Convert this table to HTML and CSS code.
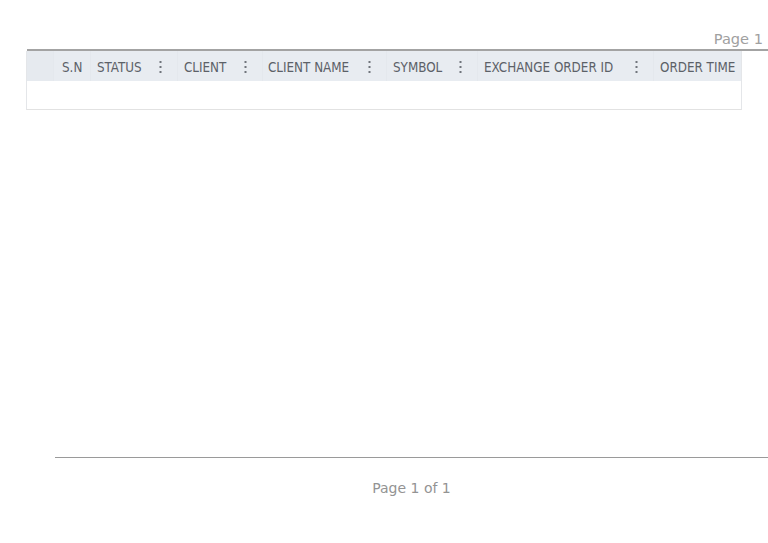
FILE: index.html
```html
<!DOCTYPE html>
<html>
<head>
<meta charset="utf-8">
<link rel="stylesheet" href="styles.css">
</head>
<body>
<div class="page-head"><span class="page-no">Page 1</span></div>
<div class="head-rule"></div>
<div class="grid">
  <div class="row header">
    <div class="cell c0"></div>
    <div class="cell c1"><span>S.N</span></div>
    <div class="cell c2"><span>STATUS</span><svg class="dots" width="3" height="14" viewBox="0 0 3 14"><rect x="0.5" y="1" width="2" height="2"/><rect x="0.5" y="6" width="2" height="2"/><rect x="0.5" y="11" width="2" height="2"/></svg></div>
    <div class="cell c3"><span>CLIENT</span><svg class="dots" width="3" height="14" viewBox="0 0 3 14"><rect x="0.5" y="1" width="2" height="2"/><rect x="0.5" y="6" width="2" height="2"/><rect x="0.5" y="11" width="2" height="2"/></svg></div>
    <div class="cell c4"><span>CLIENT NAME</span><svg class="dots" width="3" height="14" viewBox="0 0 3 14"><rect x="0.5" y="1" width="2" height="2"/><rect x="0.5" y="6" width="2" height="2"/><rect x="0.5" y="11" width="2" height="2"/></svg></div>
    <div class="cell c5"><span>SYMBOL</span><svg class="dots" width="3" height="14" viewBox="0 0 3 14"><rect x="0.5" y="1" width="2" height="2"/><rect x="0.5" y="6" width="2" height="2"/><rect x="0.5" y="11" width="2" height="2"/></svg></div>
    <div class="cell c6"><span>EXCHANGE ORDER ID</span><svg class="dots" width="3" height="14" viewBox="0 0 3 14"><rect x="0.5" y="1" width="2" height="2"/><rect x="0.5" y="6" width="2" height="2"/><rect x="0.5" y="11" width="2" height="2"/></svg></div>
    <div class="cell c7"><span>ORDER TIME</span></div>
  </div>
  <div class="row body-row"></div>
</div>
<div class="foot">
  <div class="foot-rule"></div>
  <div class="foot-text">Page 1 of 1</div>
</div>
</body>
</html>
```
FILE: styles.css
```css
html, body {
  margin: 0;
  padding: 0;
  background: #ffffff;
  overflow: hidden;
}
body {
  width: 768px;
  height: 543px;
  font-family: "DejaVu Sans", sans-serif;
}
.page-head {
  height: 49px;
  display: flex;
  justify-content: flex-end;
  align-items: flex-end;
  padding-right: 5px;
}
.page-no {
  font-size: 14.6px;
  line-height: 18px;
  color: #a0a0a0;
  margin-bottom: 1px;
}
.head-rule {
  margin-left: 27px;
  height: 2px;
  background: #a3a3a3;
}
.grid {
  margin-left: 26px;
  width: 716px;
  border-left: 1px solid #e4e6e9;
  border-right: 1px solid #e4e6e9;
  border-bottom: 1px solid #e2e2e2;
  box-sizing: border-box;
}
.row {
  display: flex;
}
.header {
  height: 30px;
  background: #e8ecf1;
}
.body-row {
  height: 28px;
  background: #ffffff;
}
.cell {
  display: flex;
  align-items: center;
  box-sizing: border-box;
  padding-left: 6px;
  padding-top: 2px;
  font-family: "DejaVu Sans Condensed", "DejaVu Sans", sans-serif;
  font-stretch: condensed;
  font-size: 13.3px;
  color: #5c6168;
  white-space: nowrap;
  border-right: 1px solid #e4e8ed;
}
.cell span {
  flex: 1;
}
.c0 { width: 27px; background: #e6eaef; padding-left: 0; }
.c1 { width: 37px; padding-left: 8px; }
.c2 { width: 87px; padding-left: 6px; }
.c3 { width: 85px; }
.c4 { width: 124px; padding-left: 5px; }
.c5 { width: 91px; }
.c6 { width: 176px; }
.c7 { flex: 1; border-right: none; }
.dots {
  fill: #70757c;
  margin-right: 15px;
  flex: none;
}
.foot {
  margin-top: 347px;
  margin-left: 55px;
}
.foot-rule {
  height: 1px;
  background: #9a9a9a;
}
.foot-text {
  margin-top: 21px;
  text-align: center;
  font-size: 14px;
  line-height: 18px;
  color: #939393;
}
```
